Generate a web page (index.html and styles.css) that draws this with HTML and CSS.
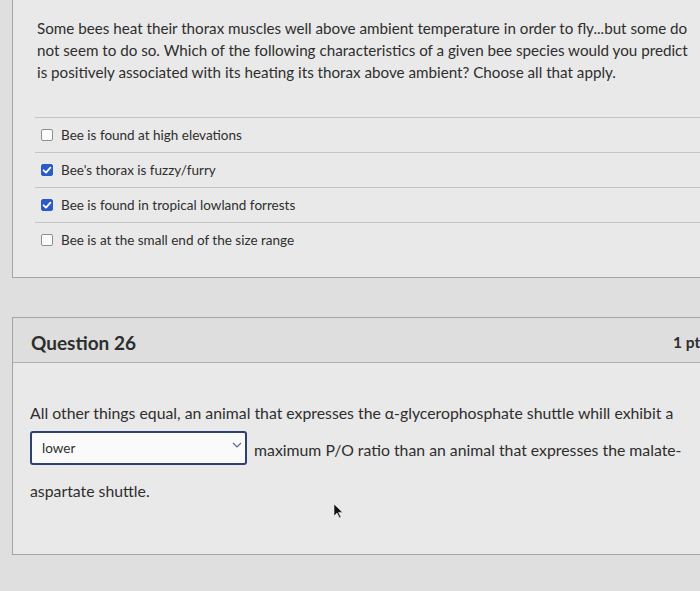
FILE: index.html
```html
<!DOCTYPE html>
<html>
<head>
<meta charset="utf-8">
<link rel="stylesheet" href="styles.css">
</head>
<body>
<div class="page">
  <section class="card card-top">
    <p class="qtext">Some bees heat their thorax muscles well above ambient temperature in order to fly...but some do not seem to do so. Which of the following characteristics of a given bee species would you predict is positively associated with its heating its thorax above ambient? Choose all that apply.</p>
    <ul class="answers">
      <li class="answer"><span class="box"></span><span>Bee is found at high elevations</span></li>
      <li class="answer"><span class="box checked"><svg viewBox="0 0 12 12" width="12" height="12"><path d="M2.6 6.3 L5 8.6 L9.4 3.6" fill="none" stroke="#fff" stroke-width="1.8" stroke-linecap="round" stroke-linejoin="round"/></svg></span><span>Bee's thorax is fuzzy/furry</span></li>
      <li class="answer"><span class="box checked"><svg viewBox="0 0 12 12" width="12" height="12"><path d="M2.6 6.3 L5 8.6 L9.4 3.6" fill="none" stroke="#fff" stroke-width="1.8" stroke-linecap="round" stroke-linejoin="round"/></svg></span><span>Bee is found in tropical lowland forrests</span></li>
      <li class="answer"><span class="box"></span><span>Bee is at the small end of the size range</span></li>
    </ul>
  </section>

  <section class="card card-q">
    <header class="qhead">
      <h2 class="qtitle">Question 26</h2>
      <span class="pts">1 pts</span>
    </header>
    <div class="qbody">
      <p class="fill">All other things equal, an animal that expresses the α-glycerophosphate shuttle whill exhibit a <span class="select"><span class="sel-val">lower</span><svg class="chev" viewBox="0 0 10 6" width="10" height="6"><path d="M1 1 L5 5 L9 1" fill="none" stroke="#5a6a8a" stroke-width="1.2"/></svg></span> maximum P/O ratio than an animal that expresses the malate-aspartate shuttle.</p>
    </div>
    <svg class="cursor" viewBox="0 0 10 16" width="10" height="16"><path d="M1 1 L1 13 L4 10 L6.5 15 L8 14.3 L5.6 9.4 L9.5 9.4 Z" fill="#111" stroke="#eee" stroke-width="0.6"/></svg>
  </section>
</div>
</body>
</html>
```

FILE: styles.css
```css
html, body {
  margin: 0;
  padding: 0;
}
body {
  background: #dfdfdf;
  font-family: Lato, "Open Sans", sans-serif;
  color: #2e2e2e;
  width: 700px;
  height: 591px;
  overflow: hidden;
}
.page {
  padding-left: 12px;
}
.card {
  border: 1px solid #a4a4a4;
  border-right: none;
  background: #e9e9e9;
  margin-right: -40px;
}
.card-top {
  border-top: none;
  padding: 17px 0 20px 24px;
}
.qtext {
  margin: 0;
  font-size: 15.2px;
  line-height: 22px;
  width: 660px;
}
.answers {
  list-style: none;
  margin: 34px 0 0 -2px;
  padding: 0;
}
.answer {
  display: flex;
  align-items: center;
  gap: 8px;
  height: 34px;
  border-top: 1px solid #c4c4c4;
  padding-left: 6px;
  font-size: 13.5px;
}
.box {
  width: 12px;
  height: 12px;
  box-sizing: border-box;
  border: 1px solid #8d8d8d;
  border-radius: 2px;
  background: #fbfbfb;
  display: flex;
}
.box.checked {
  background: #2b5bc8;
  border-color: #2b5bc8;
}
.box svg {
  margin: -1px;
}
.card-q {
  margin-top: 39px;
  position: relative;
  height: 236px;
}
.qhead {
  display: flex;
  align-items: center;
  justify-content: space-between;
  box-sizing: border-box;
  height: 45px;
  padding: 4px 0 0 18px;
  background: #dedede;
  border-bottom: 1px solid #b0b0b0;
}
.qtitle {
  margin: 0;
  font-size: 19px;
  font-weight: 700;
}
.pts {
  font-size: 15.5px;
  font-weight: 700;
  margin-right: 33px;
}
.qbody {
  padding: 32px 0 0 17px;
}
.fill {
  margin: 0;
  font-size: 15.8px;
  line-height: 36px;
  width: 672px;
}
.select {
  display: inline-flex;
  align-items: center;
  justify-content: space-between;
  box-sizing: border-box;
  width: 217px;
  height: 34px;
  vertical-align: middle;
  margin: 0 3px 8px 0;
  padding: 0 3px 0 10px;
  border: 2px solid #2f4170;
  border-radius: 3px;
  background: #fafafa;
  font-size: 13.5px;
  line-height: 16px;
}
.chev {
  margin-top: -6px;
}
.cursor {
  position: absolute;
  left: 320px;
  top: 185px;
}
```
